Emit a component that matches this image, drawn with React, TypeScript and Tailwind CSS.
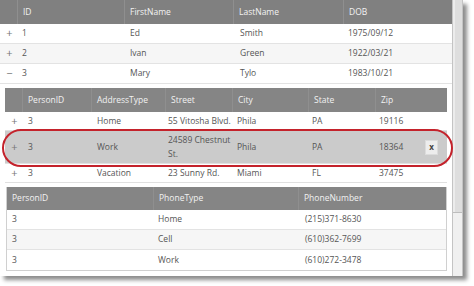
import React from 'react'

type Person = { id: string; first: string; last: string; dob: string; open?: boolean }
type Address = { pid: string; type: string; street: string; city: string; state: string; zip: string; selected?: boolean }
type Phone = { pid: string; type: string; number: string }

const people: Person[] = [
  { id: '1', first: 'Ed', last: 'Smith', dob: '1975/09/12' },
  { id: '2', first: 'Ivan', last: 'Green', dob: '1922/03/21' },
  { id: '3', first: 'Mary', last: 'Tylo', dob: '1983/10/21', open: true },
]

const addresses: Address[] = [
  { pid: '3', type: 'Home', street: '55 Vitosha Blvd.', city: 'Phila', state: 'PA', zip: '19116' },
  { pid: '3', type: 'Work', street: '24589 Chestnut St.', city: 'Phila', state: 'PA', zip: '18364', selected: true },
  { pid: '3', type: 'Vacation', street: '23 Sunny Rd.', city: 'Miami', state: 'FL', zip: '37475' },
]

const phones: Phone[] = [
  { pid: '3', type: 'Home', number: '(215)371-8630' },
  { pid: '3', type: 'Cell', number: '(610)362-7699' },
  { pid: '3', type: 'Work', number: '(610)272-3478' },
]

const mainCols = 'grid grid-cols-[17px_107px_109px_110px_1fr]'
const addrCols = 'grid grid-cols-[17px_69px_74px_67px_76px_67px_1fr]'
const phoneCols = 'grid grid-cols-[146px_145px_1fr]'

const HeadCell: React.FC<{ children?: React.ReactNode; first?: boolean }> = ({ children, first }) => (
  <div className={`flex items-center px-[5px] ${first ? '' : 'border-l border-[#8f8f8f]'}`}>{children}</div>
)

const Toggle: React.FC<{ open?: boolean }> = ({ open }) => (
  <div className="flex items-center justify-center pl-[2px] text-[11px] text-[#777]">{open ? '−' : '+'}</div>
)

const App: React.FC = () => {
  return (
    <div
      className="relative h-[286px] w-[474px] overflow-hidden bg-white text-[8.5px] text-[#555]"
      style={{ fontFamily: '"Open Sans", "Noto Sans", sans-serif' }}
    >
      <div className="flex h-[276px] w-[463px] shadow-[4px_4px_4px_rgba(0,0,0,0.45)]">
        {/* master grid */}
        <div className="flex w-[452px] flex-col bg-white">
          <div className={`${mainCols} h-[24px] bg-[#808080] text-[#f2f2f2]`}>
            <HeadCell first />
            <HeadCell>ID</HeadCell>
            <HeadCell>FirstName</HeadCell>
            <HeadCell>LastName</HeadCell>
            <HeadCell>DOB</HeadCell>
          </div>
          {people.map((p, i) => (
            <div
              key={p.id}
              className={`${mainCols} h-[20px] border-b border-[#e3e3e3] ${i % 2 === 1 ? 'bg-[#f6f6f6]' : 'bg-white'}`}
            >
              <Toggle open={p.open} />
              <div className="flex items-center px-[5px]">{p.id}</div>
              <div className="flex items-center px-[6px]">{p.first}</div>
              <div className="flex items-center px-[7px]">{p.last}</div>
              <div className="flex items-center px-[5px]">{p.dob}</div>
            </div>
          ))}

          {/* details of the expanded person */}
          <div className="flex flex-col gap-[4px] pl-[5px] pr-[5px] pt-[4px]">
            <div className="flex flex-col">
              <div className={`${addrCols} h-[24px] bg-[#858585] text-[#f2f2f2]`}>
                <HeadCell first />
                <HeadCell>PersonID</HeadCell>
                <HeadCell>AddressType</HeadCell>
                <HeadCell>Street</HeadCell>
                <HeadCell>City</HeadCell>
                <HeadCell>State</HeadCell>
                <HeadCell>Zip</HeadCell>
              </div>
              {addresses.map((a) => (
                <div
                  key={a.type}
                  className={`${addrCols} border-b border-[#e0e0e0] ${
                    a.selected ? 'h-[33px] bg-[#cbcbcb]' : 'h-[19px] bg-white'
                  }`}
                >
                  <Toggle />
                  <div className="flex items-center px-[6px]">{a.pid}</div>
                  <div className="flex items-center px-[6px]">{a.type}</div>
                  <div className="flex items-center pl-[3px] leading-[14px]">{a.street}</div>
                  <div className="flex items-center px-[5px]">{a.city}</div>
                  <div className="flex items-center px-[4px]">{a.state}</div>
                  <div className="flex items-center justify-between pl-[4px] pr-[9px]">
                    <span>{a.zip}</span>
                    {a.selected && (
                      <span className="flex h-[15px] w-[13px] items-center justify-center border border-[#dcdcdc] bg-[#ededed] text-[8px] font-bold text-[#444]">
                        x
                      </span>
                    )}
                  </div>
                </div>
              ))}
            </div>

            <div className="ml-[1px] flex flex-col border border-t-0 border-[#d0d0d0]">
              <div className={`${phoneCols} h-[23px] bg-[#858585] text-[#f2f2f2]`}>
                <HeadCell first>PersonID</HeadCell>
                <HeadCell>PhoneType</HeadCell>
                <HeadCell>PhoneNumber</HeadCell>
              </div>
              {phones.map((ph, i) => (
                <div
                  key={ph.type}
                  className={`${phoneCols} h-[20px] ${i < phones.length - 1 ? 'border-b border-[#e3e3e3]' : ''} ${
                    i % 2 === 1 ? 'bg-[#f6f6f6]' : 'bg-white'
                  }`}
                >
                  <div className="flex items-center px-[5px]">{ph.pid}</div>
                  <div className="flex items-center px-[5px]">{ph.type}</div>
                  <div className="flex items-center px-[7px]">{ph.number}</div>
                </div>
              ))}
            </div>
          </div>
        </div>

        {/* vertical scrollbar */}
        <div className="flex w-[11px] flex-col border-x border-[#c4c4c4] bg-[#f0f0f0]">
          <div className="h-[213px] border-b border-[#bdbdbd] bg-[#dedede] shadow-[inset_2px_0_0_#ececec]" />
        </div>
      </div>

      {/* highlight around the selected address */}
      <div className="pointer-events-none absolute left-[2px] top-[129px] h-[38px] w-[451px] rounded-[19px] border-2 border-[#c4222b]" />
    </div>
  )
}

export default App
